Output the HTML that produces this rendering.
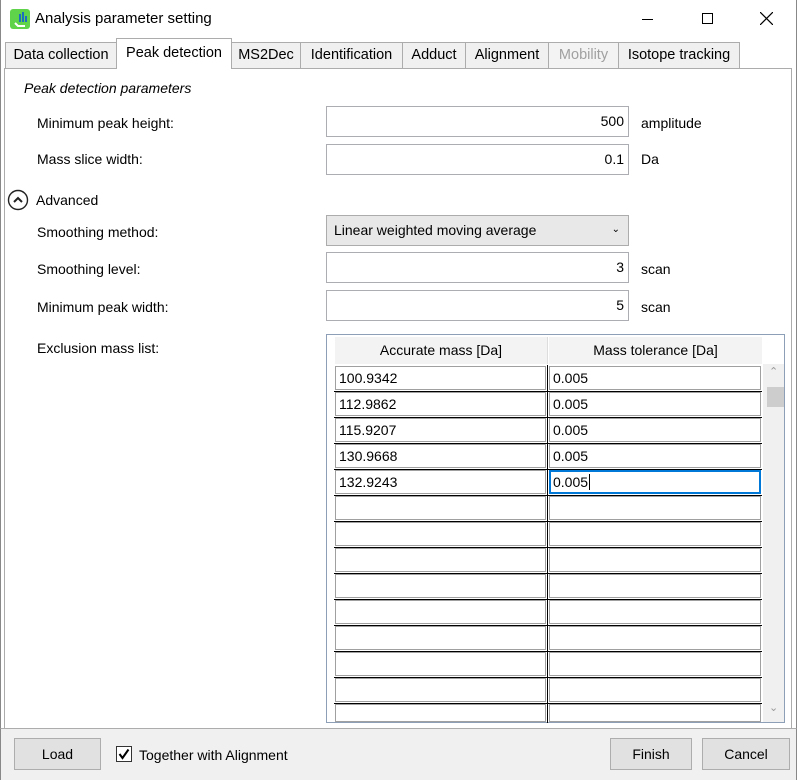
<!DOCTYPE html>
<html><head><meta charset="utf-8"><style>
*{box-sizing:border-box;margin:0;padding:0}
body{width:797px;height:780px;background:#fff;font-family:"Liberation Sans",sans-serif;font-size:14px;color:#000;position:relative;overflow:hidden}
.a{position:absolute;white-space:nowrap}
.tab{position:absolute;top:42px;height:27px;background:#f0f0f0;border:1px solid #acacac;border-bottom:none;text-align:center;line-height:25px;font-size:14.5px}
.box{position:absolute;left:326px;width:303px;height:31px;border:1px solid #abadb3;background:#fff;text-align:right;padding-right:4px;line-height:28px}
.lbl{position:absolute;left:37px}
.cell{position:absolute;height:24px;border:1px solid #a0a0a0;background:#fff;line-height:22px;padding-left:3px}
.btn{position:absolute;top:738px;height:32px;background:#e1e1e1;border:1px solid #adadad;text-align:center;line-height:30px}
</style></head><body>
<div class="a" style="left:0;top:0;width:797px;height:780px;border-left:1px solid #888;border-right:1px solid #888"></div>
<svg class="a" style="left:10px;top:9px" width="20" height="20"><rect width="20" height="20" rx="3" fill="#5fd44a"/><path d="M5 14 L8 17 L15 17" stroke="#fff" stroke-width="2" fill="none"/><rect x="9" y="5" width="2" height="8" fill="#1c6fbf"/><rect x="12" y="3" width="2" height="10" fill="#1c6fbf"/><rect x="15" y="7" width="2" height="6" fill="#1c6fbf"/></svg>
<div class="a" style="left:35px;top:10px;font-size:15px">Analysis parameter setting</div>
<div class="a" style="left:642px;top:19px;width:11px;height:1px;background:#000"></div>
<div class="a" style="left:702px;top:13px;width:11px;height:11px;border:1px solid #000"></div>
<svg class="a" style="left:760px;top:12px" width="13" height="13"><path d="M0 0L13 13M13 0L0 13" stroke="#000" stroke-width="1.2"/></svg>

<div class="tab" style="left:5px;width:112px">Data collection</div>
<div class="tab" style="left:231px;width:70px">MS2Dec</div>
<div class="tab" style="left:300px;width:103px">Identification</div>
<div class="tab" style="left:402px;width:64px">Adduct</div>
<div class="tab" style="left:465px;width:84px">Alignment</div>
<div class="tab" style="left:548px;width:71px;color:#a0a0a0;background:#f3f3f3">Mobility</div>
<div class="tab" style="left:618px;width:122px">Isotope tracking</div>
<div class="a" style="left:4px;top:68px;width:788px;height:661px;border:1px solid #acacac;border-bottom:none;background:#fff"></div>
<div class="tab" style="left:116px;top:38px;width:116px;height:31px;background:#fff;line-height:28px;z-index:2">Peak detection</div>

<div class="a" style="left:24px;top:80px;font-style:italic">Peak detection parameters</div>
<div class="lbl a" style="top:115px">Minimum peak height:</div>
<div class="box" style="top:106px">500</div><div class="a" style="left:641px;top:115px">amplitude</div>
<div class="lbl a" style="top:151px">Mass slice width:</div>
<div class="box" style="top:144px">0.1</div><div class="a" style="left:641px;top:151px">Da</div>
<svg class="a" style="left:7px;top:189px" width="22" height="22"><circle cx="11" cy="11" r="9.5" stroke="#222" stroke-width="1.4" fill="none"/><path d="M7 13L11 9L15 13" stroke="#222" stroke-width="2" fill="none"/></svg>
<div class="a" style="left:36px;top:192px">Advanced</div>
<div class="lbl a" style="top:224px">Smoothing method:</div>
<div class="box" style="top:215px;text-align:left;padding-left:7px;background:#e8e8e8;border-color:#acacac">Linear weighted moving average<span style="position:absolute;right:8px;top:0;font-size:10px">&#8964;</span></div>
<div class="lbl a" style="top:261px">Smoothing level:</div>
<div class="box" style="top:252px">3</div><div class="a" style="left:641px;top:261px">scan</div>
<div class="lbl a" style="top:299px">Minimum peak width:</div>
<div class="box" style="top:290px">5</div><div class="a" style="left:641px;top:299px">scan</div>
<div class="lbl a" style="top:340px">Exclusion mass list:</div>

<div class="a" style="left:326px;top:334px;width:459px;height:389px;border:1px solid #8c9fb6;background:#fff;overflow:hidden">
<div class="a" style="left:8px;top:2px;width:213px;height:27px;background:#f3f3f3;border-right:1px solid #ddd;text-align:center;line-height:27px">Accurate mass [Da]</div>
<div class="a" style="left:222px;top:2px;width:213px;height:27px;background:#f3f3f3;text-align:center;line-height:27px">Mass tolerance [Da]</div>
<div class="a" style="left:436px;top:29px;width:22px;height:360px;background:#f0f0f0"></div>
<div class="a" style="left:440px;top:52px;width:17px;height:20px;background:#cdcdcd"></div>
<div class="a" style="left:442px;top:30px;color:#999;font-size:11px">&#8963;</div>
<div class="a" style="left:442px;top:366px;color:#999;font-size:11px">&#8964;</div>
</div>
<div id="rows"></div>
<script>
var v=["100.9342","112.9862","115.9207","130.9668","132.9243"],h="";
for(var i=0;i<14;i++){var y=366+i*26;if(y>720)break;var ht=Math.min(24,722-y);
h+='<div class="a" style="left:334px;top:'+(y+25)+'px;width:428px;height:1px;background:#000"></div>';
h+='<div class="a" style="left:547px;top:'+(y-1)+'px;width:1px;height:'+(ht+2)+'px;background:#000"></div>';
h+='<div class="cell" style="left:335px;top:'+y+'px;width:211px;height:'+ht+'px">'+(v[i]||"")+'</div>';
h+='<div class="cell" style="left:549px;top:'+y+'px;width:212px;height:'+ht+'px;'+(i==4?'border:2px solid #0078d7;line-height:20px;padding-left:2px':'')+'">'+(v[i]?"0.005":"")+(i==4?'<span style="border-left:1px solid #000;margin-left:1px"></span>':'')+'</div>';}
document.getElementById("rows").innerHTML=h;
</script>

<div class="a" style="left:0;top:728px;width:797px;height:52px;background:#f0f0f0;border-top:1px solid #acacac;border-left:1px solid #888;border-right:1px solid #888"></div>
<div class="btn" style="left:14px;width:87px">Load</div>
<div class="a" style="left:116px;top:746px;width:16px;height:16px;border:1px solid #333;background:#fff"></div>
<svg class="a" style="left:118px;top:748px" width="12" height="12"><path d="M1.5 6L4.5 10L10.5 1.5" stroke="#000" stroke-width="2" fill="none"/></svg>
<div class="a" style="left:139px;top:747px">Together with Alignment</div>
<div class="btn" style="left:610px;width:82px">Finish</div>
<div class="btn" style="left:702px;width:88px">Cancel</div>
</body></html>
